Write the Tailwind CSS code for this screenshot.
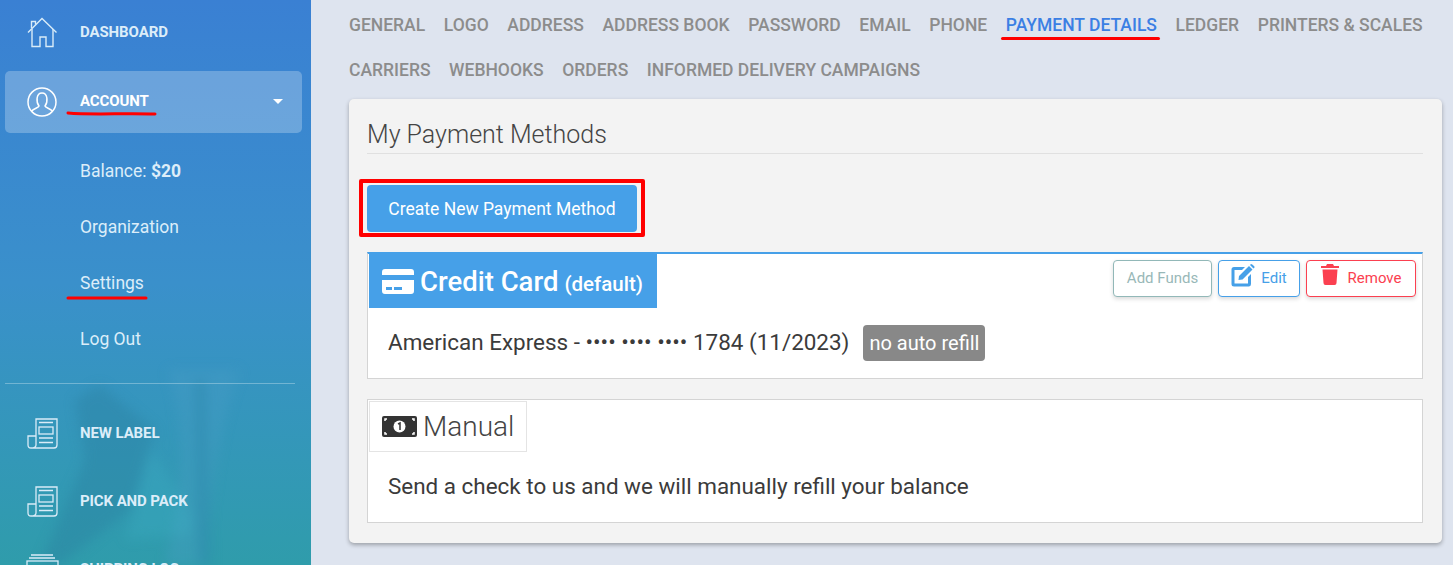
<!DOCTYPE html>
<html>
<head>
<meta charset="utf-8">
<script src="https://cdn.jsdelivr.net/npm/@tailwindcss/browser@4"></script>
</head>
<body class="m-0 overflow-hidden bg-[#dee4ef] font-['Roboto',sans-serif]">
<div class="relative flex h-[565px] w-[1453px] overflow-hidden">
  <!-- Sidebar -->
  <aside class="relative h-[565px] w-[311px] shrink-0 overflow-hidden bg-gradient-to-b from-[#3a80d3] via-[#3a90cb] to-[#2f9cab] text-white">
    <svg class="absolute left-0 top-[330px] h-[235px] w-[311px] blur-[6px]" viewBox="0 0 311 235" fill="none">
      <path d="M75 70 L100 55 L155 100 L130 180 L60 235 L40 235 L85 130 Z" fill="#2a80a0" fill-opacity=".4"/>
      <path d="M168 40 L240 40 C225 80 215 120 205 235 L165 235 C180 170 190 110 168 40 Z" fill="#4ba0c6" fill-opacity=".3"/>
      <path d="M150 120 C165 140 180 160 192 190 L190 205 L125 210 C135 180 140 160 150 120 Z" fill="#3fb5c8" fill-opacity=".25"/>
      <path d="M195 50 L205 50 L210 235 L198 235 Z" fill="#2a86a8" fill-opacity=".45"/>
    </svg>
    <div class="relative flex h-[65px] items-center pl-[27px]">
      <svg class="h-[31px] w-[31px]" viewBox="0 0 31 31" fill="none" stroke="#d9ecf8" stroke-width="1.4"><path d="M1 15.5 L15 1.5 L29.5 15.5"/><path d="M5 12 V29.5 H13 V20 H19 V29.5 H26 V12"/><path d="M4.500 11 V4.500 H8.500 V7.500"/></svg>
      <span class="ml-[22px] text-[15px] font-bold tracking-[-0.1px] text-[#dcedf9]">DASHBOARD</span>
    </div>
    <div class="relative mx-[5px] mt-[6px] flex h-[62px] w-[297px] items-center rounded-[5px] bg-white/25 pl-[22px]">
      <svg class="h-[30px] w-[30px]" viewBox="0 0 30 30" fill="none" stroke="#fff" stroke-width="1.500"><circle cx="15" cy="15" r="14"/><path d="M4.500 24.500 C6 21.500 11.500 21 12 19 C9 15 9 6 15 6 C21 6 21 15 18 19 C18.500 21 24 21.500 25.500 24.500"/></svg>
      <span class="mb-[2px] ml-[23px] text-[15px] font-bold tracking-[-0.1px] text-white">ACCOUNT</span>
      <span class="absolute left-[268px] top-[28px] h-0 w-0 border-x-[5px] border-t-[5px] border-x-transparent border-t-white"></span>
    </div>
    <div class="relative mt-[10px] flex flex-col pl-[80px] text-[17.5px] text-[#dcedf9]">
      <div class="flex h-[56px] items-center">Balance:&nbsp;<b class="font-bold">$20</b></div>
      <div class="flex h-[56px] items-center">Organization</div>
      <div class="flex h-[56px] items-center">Settings</div>
      <div class="flex h-[56px] items-center">Log Out</div>
    </div>
    <div class="relative mx-[5px] mt-[16px] h-px w-[290px] bg-white/30"></div>
    <div class="relative mt-[15px] flex h-[68px] items-center pl-[27px]">
      <svg class="h-[31px] w-[31px]" viewBox="0 0 31 31" fill="none" stroke="#d9ecf8" stroke-width="1.300"><path d="M9 24 V1 H30 V27 C30 29 29 30 27 30 H4 C2 30 1 29 1 27 V18 H9 V27 C9 29 7 30 4 30"/><rect x="12" y="9" width="14" height="7"/><path d="M12 4.500 H26 M12 20 H26 M12 24.500 H26"/></svg>
      <span class="ml-[22px] text-[15px] font-bold tracking-[-0.1px] text-[#dcedf9]">NEW LABEL</span>
    </div>
    <div class="relative flex h-[68px] items-center pl-[27px]">
      <svg class="h-[31px] w-[31px]" viewBox="0 0 31 31" fill="none" stroke="#d9ecf8" stroke-width="1.300"><path d="M9 24 V1 H30 V27 C30 29 29 30 27 30 H4 C2 30 1 29 1 27 V18 H9 V27 C9 29 7 30 4 30"/><rect x="12" y="9" width="14" height="7"/><path d="M12 4.500 H26 M12 20 H26 M12 24.500 H26"/></svg>
      <span class="ml-[22px] text-[15px] font-bold tracking-[-0.1px] text-[#dcedf9]">PICK AND PACK</span>
    </div>
    <div class="relative flex h-[68px] items-center pl-[26px]">
      <svg class="h-[31px] w-[33px]" viewBox="0 0 33 31" fill="none" stroke="#d9ecf8" stroke-width="1.300"><path d="M5 1 H27 M3 4 H29"/><rect x="1" y="7" width="31" height="23"/></svg>
      <span class="ml-[21px] text-[15px] font-bold tracking-[-0.1px] text-[#dcedf9]">SHIPPING LOG</span>
    </div>
    <!-- annotations -->
    <svg class="absolute left-0 top-0 h-[320px] w-[311px]" viewBox="0 0 311 320" fill="none" stroke="#f00" stroke-width="3" stroke-linecap="round"><path d="M68 113 C90 115 125 113 155 114"/><path d="M68 298 C90 298 120 298 146 298"/></svg>
  </aside>

  <!-- Main -->
  <main class="min-w-0 flex-1 pl-[38px]">
    <nav class="flex w-[1090px] flex-wrap gap-x-[18.6px] pt-[3px] text-[17.5px] font-medium leading-[45px] text-[#8c8c8c]">
      <span>GENERAL</span><span>LOGO</span><span>ADDRESS</span><span>ADDRESS BOOK</span><span>PASSWORD</span><span>EMAIL</span><span>PHONE</span><span class="relative text-[#3b7fe4]">PAYMENT DETAILS<span class="absolute -left-[5px] -right-[3px] top-[34px] h-[3px] rounded-full bg-[#f00]"></span></span><span>LEDGER</span><span>PRINTERS &amp; SCALES</span><span>CARRIERS</span><span>WEBHOOKS</span><span>ORDERS</span><span>INFORMED DELIVERY CAMPAIGNS</span>
    </nav>
    <section class="mt-[6px] h-[444px] w-[1093px] rounded-[5px] bg-[#f3f3f3] pl-[18px] pr-[19px] pt-[19px] shadow-[0_2px_4px_rgba(0,0,0,0.3)]">
      <h2 class="h-[36px] border-b border-[#e0e0e0] text-[25px] font-light leading-[34px] text-[#444]">My Payment Methods</h2>
      <div class="ml-[-8px] mt-[25px] h-[58px] w-[286px] rounded-[2px] border-[4px] border-[#f00] pl-[4px] pt-[2px]">
        <button class="h-[47px] w-[270px] rounded-[4px] bg-[#46a0e8] pt-[2px] text-[17.5px] text-white">Create New Payment Method</button>
      </div>
      <div class="mt-[15px] h-[127px] w-[1056px] border border-t-2 border-[#d4d4d4] border-t-[#46a0e8] bg-white">
        <div class="flex items-start justify-between">
          <div class="ml-px flex h-[54px] w-[288px] items-center bg-[#46a0e8] pl-[13px] text-white">
            <svg class="h-[25px] w-[32px]" viewBox="0 0 32 25" fill="#fff"><path d="M3 0 H29 A3 3 0 0 1 32 3 V6 H0 V3 A3 3 0 0 1 3 0 Z M0 11 H32 V22 A3 3 0 0 1 29 25 H3 A3 3 0 0 1 0 22 Z"/><rect x="4" y="18" width="6" height="3" fill="#46a0e8"/><rect x="12" y="18" width="8" height="3" fill="#46a0e8"/></svg>
            <span class="ml-[6px] mt-[2px] text-[27.5px] font-medium">Credit Card</span>
            <span class="ml-[6px] mt-[6px] text-[20.5px] font-medium">(default)</span>
          </div>
          <div class="mr-[6px] mt-[6px] flex gap-[6px] text-[15px]">
            <button class="h-[37px] w-[99px] rounded-[4px] border border-[#92b8b8] bg-white text-[#99b8b8] shadow-[0_2px_4px_rgba(0,0,0,0.15)]">Add Funds</button>
            <button class="flex h-[37px] w-[82px] items-center justify-center gap-[3px] rounded-[4px] border border-[#46a0e8] bg-white text-[#46a0e8] shadow-[0_2px_4px_rgba(0,0,0,0.15)]"><svg class="mb-[7px] h-[23px] w-[24px]" viewBox="0 0 24 23" fill="#46a0e8"><path d="M3 3 H14 L11 6 H3.500 V19.500 H17 V13 L20 10 V20 A2.500 2.500 0 0 1 18 22.500 H3 A2.500 2.500 0 0 1 0.500 20 V5.500 A2.500 2.500 0 0 1 3 3 Z"/><path d="M8 12 L18 2 L21.500 5.500 L11.500 15.500 L7.500 16 Z M19 1 L20 0 Q21 0 23 2 Q24 3 23.500 3.500 L22.500 4.500 Z"/></svg><span class="ml-[3px]">Edit</span></button>
            <button class="flex h-[37px] w-[110px] items-center justify-center gap-[9px] rounded-[4px] border border-[#fb4050] bg-white text-[#fb4050] shadow-[0_2px_4px_rgba(0,0,0,0.15)]"><svg class="mb-[9px] h-[21px] w-[18px]" viewBox="0 0 18 21" fill="#fb4050"><path d="M6 0 H12 L13 2 H18 V4 H0 V2 H5 Z"/><path d="M1.500 5.500 H16.500 L15.500 19 A2 2 0 0 1 13.500 21 H4.500 A2 2 0 0 1 2.500 19 Z"/></svg>Remove</button>
          </div>
        </div>
        <div class="mt-[16px] flex items-center pl-[20px] text-[22.45px] leading-[36px] text-[#3b3b3b]">
          <span class="mb-[2px]">American Express - •••• •••• •••• 1784 (11/2023)</span>
          <span class="ml-[14px] rounded-[4px] bg-[#888] px-[6px] text-[20px] text-white">no auto refill</span>
        </div>
      </div>
      <div class="mt-[20px] h-[124px] w-[1056px] border border-[#d4d4d4] bg-white">
        <div class="ml-px mt-px flex h-[51px] w-[158px] items-center border border-[#e4e4e4] pl-[12px] text-[#444]">
          <svg class="h-[21px] w-[35px]" viewBox="0 0 35 21"><rect width="35" height="21" rx="2" fill="#333"/><circle cx="17.500" cy="10.500" r="6" fill="#fff"/><path d="M16 8 L18 7 V14" fill="none" stroke="#333" stroke-width="1.500"/><path d="M3 5 V3 H5 M32 5 V3 H30 M3 16 V18 H5 M32 16 V18 H30" fill="none" stroke="#fff" stroke-width="1.500"/></svg>
          <span class="ml-[6px] text-[28px] font-light">Manual</span>
        </div>
        <p class="mt-[17px] pl-[20px] text-[22.45px] leading-[34px] text-[#3b3b3b]">Send a check to us and we will manually refill your balance</p>
      </div>
    </section>
  </main>
</div>
</body>
</html>
